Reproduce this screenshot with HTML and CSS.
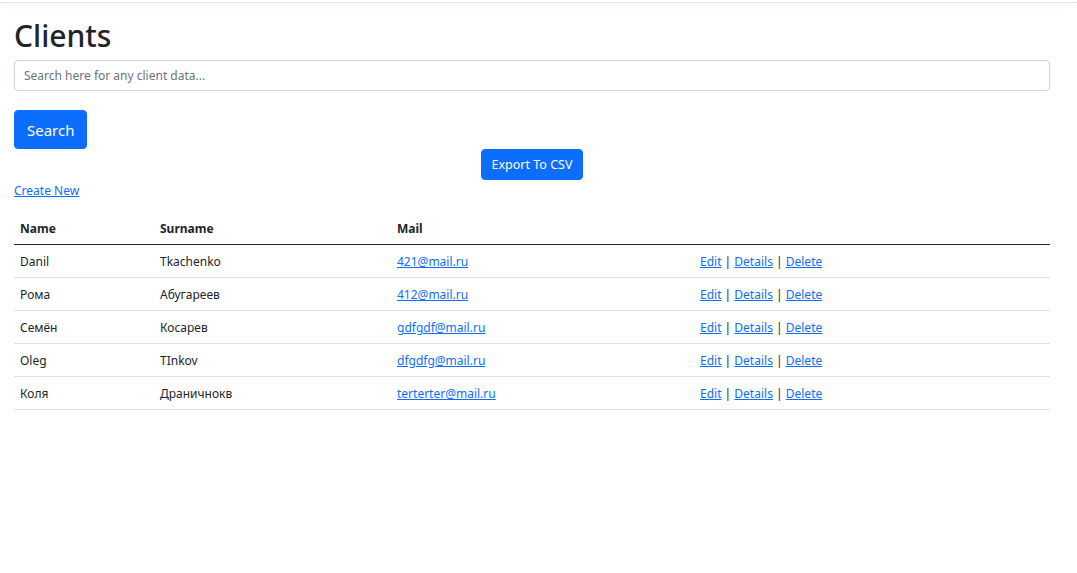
FILE: index.html
```html
<!DOCTYPE html>
<html lang="en">
<head>
<meta charset="utf-8">
<title>Clients</title>
<link rel="stylesheet" href="styles.css">
</head>
<body>
<div class="topbar"></div>
<main class="container">
  <h1 class="title">Clients</h1>
  <form class="search-form">
    <input class="form-control" type="text" placeholder="Search here for any client data...">
    <button class="btn btn-search" type="button">Search</button>
  </form>
  <div class="export-row">
    <button class="btn btn-export" type="button">Export To CSV</button>
  </div>
  <p class="create"><a href="#">Create New</a></p>
  <table class="table">
    <thead>
      <tr>
        <th class="c-name">Name</th>
        <th class="c-surname">Surname</th>
        <th class="c-mail">Mail</th>
        <th class="c-actions"></th>
      </tr>
    </thead>
    <tbody>
      <tr><td>Danil</td><td>Tkachenko</td><td><a href="#">421@mail.ru</a></td><td><a href="#">Edit</a> | <a href="#">Details</a> | <a href="#">Delete</a></td></tr>
      <tr><td>Рома</td><td>Абугареев</td><td><a href="#">412@mail.ru</a></td><td><a href="#">Edit</a> | <a href="#">Details</a> | <a href="#">Delete</a></td></tr>
      <tr><td>Семён</td><td>Косарев</td><td><a href="#">gdfgdf@mail.ru</a></td><td><a href="#">Edit</a> | <a href="#">Details</a> | <a href="#">Delete</a></td></tr>
      <tr><td>Oleg</td><td>TInkov</td><td><a href="#">dfgdfg@mail.ru</a></td><td><a href="#">Edit</a> | <a href="#">Details</a> | <a href="#">Delete</a></td></tr>
      <tr><td>Коля</td><td>Драничнокв</td><td><a href="#">terterter@mail.ru</a></td><td><a href="#">Edit</a> | <a href="#">Details</a> | <a href="#">Delete</a></td></tr>
    </tbody>
  </table>
</main>
</body>
</html>
```
FILE: styles.css
```css
* { box-sizing: border-box; }
html, body { margin: 0; padding: 0; background: #fff; }
body {
  font-family: "Noto Sans", "Open Sans", sans-serif;
  font-size: 12px;
  line-height: 1.5;
  color: #212529;
}
.topbar {
  height: 3px;
  border-bottom: 1px solid #e3e3e8;
  box-shadow: 0 2px 6px rgba(0,0,0,0.05);
}
.container {
  padding: 0 27px 0 14px;
}
.title {
  font-size: 30px;
  font-weight: 500;
  line-height: 36px;
  margin: 15px 0 6px;
}
.search-form { margin: 0; }
.form-control {
  display: block;
  width: 100%;
  height: 31px;
  padding: 4px 9px;
  font-family: inherit;
  font-size: 12px;
  color: #212529;
  border: 1px solid #ced4da;
  border-radius: 4px;
  outline: none;
}
.form-control::placeholder { color: #6c757d; }
.btn {
  font-family: inherit;
  color: #fff;
  background: #0d6efd;
  border: 1px solid #0d6efd;
  border-radius: 4px;
  cursor: pointer;
}
.btn-search {
  display: block;
  margin-top: 19px;
  height: 39px;
  padding: 0 12px;
  font-size: 15px;
}
.export-row {
  display: flex;
  justify-content: center;
}
.btn-export {
  height: 31px;
  padding: 0 10px;
  font-size: 12.5px;
}
.create {
  margin: 1px 0 12px;
  line-height: 19px;
}
a { color: #0d6efd; text-decoration: underline; }
.table {
  width: 100%;
  border-collapse: collapse;
}
.table th, .table td {
  text-align: left;
  padding: 7px 6px 5px;
  line-height: 20px;
  border-bottom: 1px solid #dee2e6;
}
.table th { font-weight: 700; border-bottom: 1px solid #212529; }
.c-name { width: 140px; }
.c-surname { width: 237px; }
.c-mail { width: 303px; }
```
